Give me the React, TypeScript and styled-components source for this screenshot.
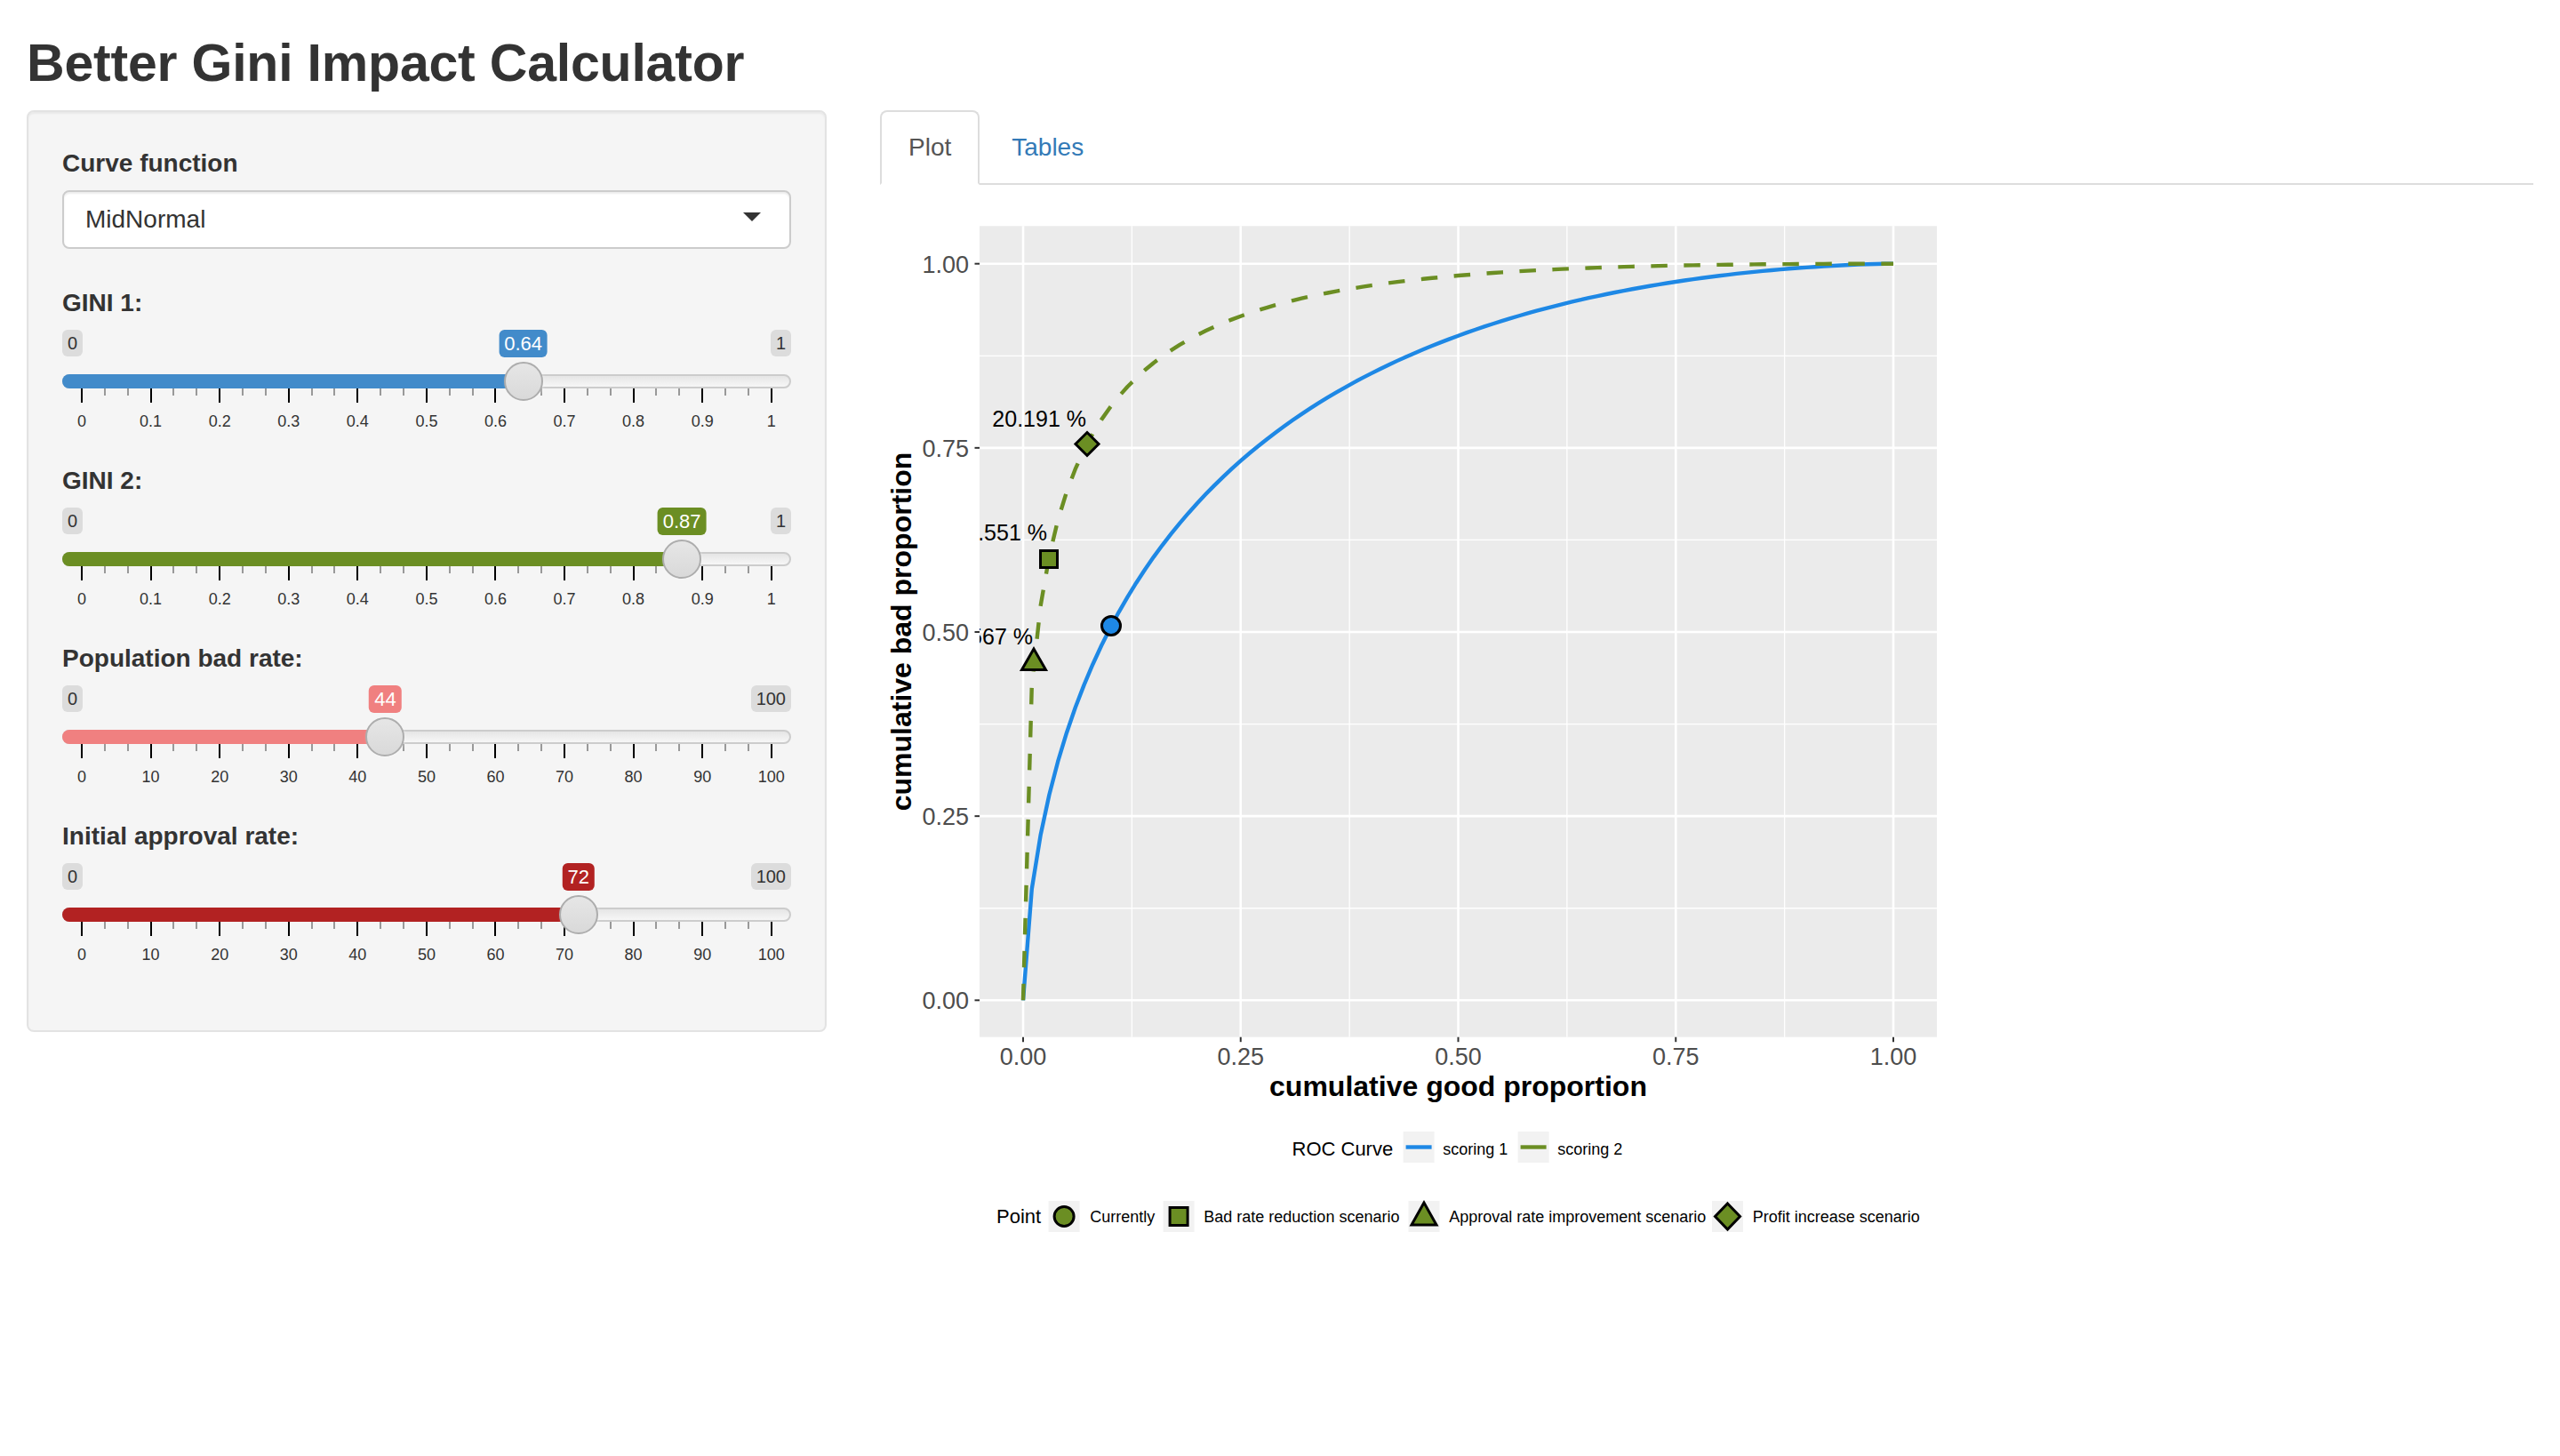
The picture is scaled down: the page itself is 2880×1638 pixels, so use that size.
import React from "react";
import styled, { createGlobalStyle } from "styled-components";

const GlobalStyle = createGlobalStyle`
  html, body { margin: 0; padding: 0; background: #fff; }
  body {
    font-family: "Liberation Sans", Helvetica, Arial, sans-serif;
    font-size: 28px;
    line-height: 40px;
    color: #333;
  }
  *, *::before, *::after { box-sizing: border-box; }
`;

/* ---------- math for the binormal ROC curves ---------- */
const erf = (v: number) => {
  const s = Math.sign(v);
  const x = Math.abs(v);
  const t = 1 / (1 + 0.3275911 * x);
  const y =
    1 -
    ((((1.061405429 * t - 1.453152027) * t + 1.421413741) * t - 0.284496736) * t + 0.254829592) *
      t *
      Math.exp(-x * x);
  return s * y;
};
const Phi = (z: number) => 0.5 * (1 + erf(z / Math.SQRT2));
const PhiInv = (p: number) => {
  const a = [-39.69683028665376, 220.9460984245205, -275.9285104469687, 138.357751867269, -30.66479806614716, 2.506628277459239];
  const b = [-54.47609879822406, 161.5858368580409, -155.6989798598866, 66.80131188771972, -13.28068155288572];
  const c = [-0.007784894002430293, -0.3223964580411365, -2.400758277161838, -2.549732539343734, 4.374664141464968, 2.938163982698783];
  const d = [0.007784695709041462, 0.3224671290700398, 2.445134137142996, 3.754408661907416];
  const plow = 0.02425;
  if (p < plow) {
    const q = Math.sqrt(-2 * Math.log(p));
    return (((((c[0] * q + c[1]) * q + c[2]) * q + c[3]) * q + c[4]) * q + c[5]) / ((((d[0] * q + d[1]) * q + d[2]) * q + d[3]) * q + 1);
  }
  if (p > 1 - plow) {
    const q = Math.sqrt(-2 * Math.log(1 - p));
    return -(((((c[0] * q + c[1]) * q + c[2]) * q + c[3]) * q + c[4]) * q + c[5]) / ((((d[0] * q + d[1]) * q + d[2]) * q + d[3]) * q + 1);
  }
  const q = p - 0.5;
  const r = q * q;
  return ((((((a[0] * r + a[1]) * r + a[2]) * r + a[3]) * r + a[4]) * r + a[5]) * q) / (((((b[0] * r + b[1]) * r + b[2]) * r + b[3]) * r + b[4]) * r + 1);
};

/* plot coordinates (inside the 1210 x 1200 plot image) */
const PX0 = 112;
const PX1 = 1189;
const PY0 = 46.3;
const PY1 = 958.7;
const X = (v: number) => 161 + 979 * v;
const Y = (v: number) => 917.3 - 828.6 * v;

const rocPoints = (gini: number) => {
  const shift = Math.SQRT2 * PhiInv((1 + gini) / 2);
  const pts: string[] = [];
  for (let i = 0; i <= 100; i++) {
    const x = i / 100;
    const y = i === 0 ? 0 : i === 100 ? 1 : Phi(shift + PhiInv(x));
    pts.push(`${X(x).toFixed(2)},${Y(y).toFixed(2)}`);
  }
  return pts.join(" ");
};

/* ---------- layout ---------- */
const Page = styled.div`
  padding: 0 30px;
`;
const Title = styled.h2`
  margin: 38px 0 20px;
  font-size: 59px;
  font-weight: 700;
  line-height: 66px;
  color: #333;
  letter-spacing: -0.2px;
`;
const Row = styled.div`
  display: grid;
  grid-template-columns: 1fr 2fr;
  margin: 0 -30px;
`;
const Col = styled.div`
  padding: 0 30px;
  min-width: 0;
`;
const Well = styled.div`
  background: #f5f5f5;
  border: 2px solid #e3e3e3;
  border-radius: 8px;
  padding: 38px;
  box-shadow: inset 0 2px 2px rgba(0, 0, 0, 0.05);
`;
const FormGroup = styled.div<{ $gap: number }>`
  margin-bottom: ${(p) => p.$gap}px;
`;
const Label = styled.label`
  display: block;
  font-weight: 700;
  font-size: 28px;
  line-height: 40px;
  margin-bottom: 10px;
`;
const SelectBox = styled.div`
  height: 66px;
  margin-top: 1px;
  display: flex;
  align-items: center;
  justify-content: space-between;
  padding: 0 32px 0 24px;
  background: #fff;
  border: 2px solid #ccc;
  border-radius: 8px;
  box-shadow: inset 0 2px 2px rgba(0, 0, 0, 0.075);
  font-size: 28px;
  color: #333;
`;
const Caret = styled.span`
  width: 0;
  height: 0;
  margin-top: -6px;
  border-style: solid;
  border-width: 10px 10px 0 10px;
  border-color: #333 transparent transparent transparent;
`;

/* ---------- slider ---------- */
const SliderBox = styled.div`
  position: relative;
  height: 120px;
`;
const EndRow = styled.div`
  display: flex;
  justify-content: space-between;
  align-items: flex-start;
  height: 50px;
`;
const EndLabel = styled.span`
  font-size: 20px;
  line-height: 26px;
  padding: 2px 6px;
  background: rgba(0, 0, 0, 0.1);
  border-radius: 6px;
  color: #333;
`;
const Bubble = styled.span<{ $color: string }>`
  position: absolute;
  top: 0;
  transform: translateX(-50%);
  font-size: 22px;
  line-height: 27px;
  padding: 2px 6px;
  background: ${(p) => p.$color};
  color: #fff;
  border-radius: 6px;
  white-space: nowrap;
`;
const Track = styled.div`
  position: relative;
  height: 16px;
  border: 2px solid #ccc;
  border-radius: 16px;
  background: linear-gradient(to bottom, #ddd -50%, #fff 150%);
`;
const Fill = styled.div<{ $color: string }>`
  position: absolute;
  left: -2px;
  top: -2px;
  bottom: -2px;
  background: ${(p) => p.$color};
  border-radius: 16px 0 0 16px;
`;
const Handle = styled.div`
  position: absolute;
  top: -16px;
  width: 44px;
  height: 44px;
  margin-left: -22px;
  border-radius: 50%;
  background: linear-gradient(to bottom, #e6e6e6, #d9d9d9);
  border: 2px solid #adadad;
  box-shadow: 1px 1px 3px rgba(255, 255, 255, 0.3);
`;
const Grid = styled.div`
  display: flex;
  justify-content: space-between;
  padding: 0 22px;
`;
const TickCol = styled.div`
  width: 0;
  display: flex;
  flex-direction: column;
  align-items: center;
`;
const TickMark = styled.div<{ $major: boolean }>`
  flex: none;
  width: 2px;
  height: ${(p) => (p.$major ? 16 : 8)}px;
  background: ${(p) => (p.$major ? "#000" : "#999")};
`;
const TickText = styled.span`
  margin-top: 10px;
  font-size: 18px;
  line-height: 22px;
  color: #333;
  white-space: nowrap;
`;

type SliderProps = { label: string; min: number; max: number; value: number; color: string; decimals: boolean };

const Slider = ({ label, min, max, value, color, decimals }: SliderProps) => {
  const f = (value - min) / (max - min);
  const ticks = Array.from({ length: 31 }, (_, i) => i);
  const fmt = (v: number) => (decimals ? String(Math.round(v * 10) / 10) : String(Math.round(v)));
  return (
    <FormGroup $gap={30}>
      <Label>{label}</Label>
      <SliderBox>
        <EndRow>
          <EndLabel>{min}</EndLabel>
          <EndLabel>{max}</EndLabel>
        </EndRow>
        <Bubble $color={color} style={{ left: `calc(22px + ${f} * (100% - 44px))` }}>
          {value}
        </Bubble>
        <Track>
          <Fill $color={color} style={{ width: `calc(22px + ${f} * (100% - 40px))` }} />
          <Handle style={{ left: `calc(20px + ${f} * (100% - 40px))` }} />
        </Track>
        <Grid>
          {ticks.map((i) => {
            const major = i % 3 === 0;
            return (
              <TickCol key={i}>
                <TickMark $major={major} />
                {major && <TickText>{fmt(min + ((max - min) * i) / 30)}</TickText>}
              </TickCol>
            );
          })}
        </Grid>
      </SliderBox>
    </FormGroup>
  );
};

/* ---------- tabs ---------- */
const NavTabs = styled.div`
  display: flex;
  border-bottom: 2px solid #ddd;
`;
const Tab = styled.a<{ $active?: boolean }>`
  display: block;
  margin-right: 4px;
  margin-bottom: -2px;
  padding: 20px 30px;
  line-height: 40px;
  font-size: 28px;
  border: 2px solid ${(p) => (p.$active ? "#ddd" : "transparent")};
  border-bottom-color: ${(p) => (p.$active ? "#fff" : "transparent")};
  border-radius: 8px 8px 0 0;
  background: ${(p) => (p.$active ? "#fff" : "transparent")};
  color: ${(p) => (p.$active ? "#555" : "#337ab7")};
  text-decoration: none;
  cursor: pointer;
`;

const PlotSvg = styled.svg`
  display: block;
  font-family: "Liberation Sans", Helvetica, Arial, sans-serif;
`;

const GREEN = "#6B8E23";
const BLUE = "#1E88E5";

const Plot = () => {
  const majors = [0, 0.25, 0.5, 0.75, 1];
  const minors = [0.125, 0.375, 0.625, 0.875];
  const fmt = (v: number) => v.toFixed(2);
  const pw = PX1 - PX0;
  const ph = PY1 - PY0;
  const cx = (PX0 + PX1) / 2;
  const cy = (PY0 + PY1) / 2;
  return (
    <PlotSvg width={1210} height={1200} viewBox="0 0 1210 1200">
      <defs>
        <clipPath id="panel">
          <rect x={PX0} y={PY0} width={pw} height={ph} />
        </clipPath>
      </defs>
      <rect x={PX0} y={PY0} width={pw} height={ph} fill="#EBEBEB" />
      {minors.map((v) => (
        <g key={`m${v}`} stroke="#fff" strokeWidth={1.3}>
          <line x1={X(v)} x2={X(v)} y1={PY0} y2={PY1} />
          <line x1={PX0} x2={PX1} y1={Y(v)} y2={Y(v)} />
        </g>
      ))}
      {majors.map((v) => (
        <g key={`M${v}`} stroke="#fff" strokeWidth={2.6}>
          <line x1={X(v)} x2={X(v)} y1={PY0} y2={PY1} />
          <line x1={PX0} x2={PX1} y1={Y(v)} y2={Y(v)} />
        </g>
      ))}
      <g clipPath="url(#panel)">
        <polyline points={rocPoints(0.64)} fill="none" stroke={BLUE} strokeWidth={4.4} strokeLinejoin="round" />
        <polyline
          points={rocPoints(0.87)}
          fill="none"
          stroke={GREEN}
          strokeWidth={4.4}
          strokeDasharray="18.5 18.5"
          strokeLinejoin="round"
        />
        <g fontSize={25} fill="#000" textAnchor="end">
          <text x={232} y={272}>20.191 %</text>
          <text x={188} y={400}>12.551 %</text>
          <text x={172} y={517}>10.567 %</text>
        </g>
      </g>
      <g stroke="#000" strokeWidth={3}>
        <circle cx={260} cy={496} r={10.5} fill={BLUE} />
        <rect x={180.5} y={411.5} width={19} height={19} fill={GREEN} />
        <polygon points="173,522 159.5,545.5 186.5,545.5" fill={GREEN} />
        <polygon points="233,278.5 246,291.5 233,304.5 220,291.5" fill={GREEN} />
      </g>
      {/* axes */}
      <g stroke="#333" strokeWidth={2}>
        {majors.map((v) => (
          <line key={`ty${v}`} x1={PX0 - 5.5} x2={PX0} y1={Y(v)} y2={Y(v)} />
        ))}
        {majors.map((v) => (
          <line key={`tx${v}`} x1={X(v)} x2={X(v)} y1={PY1} y2={PY1 + 5.5} />
        ))}
      </g>
      <g fontSize={27} fill="#4D4D4D">
        {majors.map((v) => (
          <text key={`ly${v}`} x={100} y={Y(v) + 10} textAnchor="end">
            {fmt(v)}
          </text>
        ))}
        {majors.map((v) => (
          <text key={`lx${v}`} x={X(v)} y={989.5} textAnchor="middle">
            {fmt(v)}
          </text>
        ))}
      </g>
      <text x={cx} y={1025} textAnchor="middle" fontSize={32} fontWeight={700} fill="#000">
        cumulative good proportion
      </text>
      <text transform={`translate(35,${cy}) rotate(-90)`} textAnchor="middle" fontSize={32} fontWeight={700} fill="#000">
        cumulative bad proportion
      </text>
      {/* legend: ROC curve */}
      <text x={463.5} y={1092} fontSize={22} fill="#000">ROC Curve</text>
      <rect x={588.6} y={1065} width={35} height={35} fill="#F2F2F2" />
      <line x1={591.6} x2={620.6} y1={1082.5} y2={1082.5} stroke={BLUE} strokeWidth={4.4} />
      <text x={633.3} y={1090.5} fontSize={18} fill="#000">scoring 1</text>
      <rect x={717.6} y={1065} width={35} height={35} fill="#F2F2F2" />
      <line x1={720.6} x2={749.6} y1={1082.5} y2={1082.5} stroke={GREEN} strokeWidth={4.4} />
      <text x={762.3} y={1090.5} fontSize={18} fill="#000">scoring 2</text>
      {/* legend: Point */}
      <text x={131} y={1168} fontSize={22} fill="#000">Point</text>
      <rect x={189.6} y={1143} width={35} height={35} fill="#F2F2F2" />
      <rect x={318.6} y={1143} width={35} height={35} fill="#F2F2F2" />
      <rect x={594.5} y={1143} width={35} height={35} fill="#F2F2F2" />
      <rect x={936} y={1143} width={35} height={35} fill="#F2F2F2" />
      <g stroke="#000" strokeWidth={3} fill={GREEN}>
        <circle cx={207.1} cy={1160.5} r={11} />
        <rect x={326.1} y={1150.5} width={20} height={20} />
        <polygon points="612,1145 598,1170 626,1170" />
        <polygon points="953.5,1146 967.5,1160.5 953.5,1175 939.5,1160.5" />
      </g>
      <g fontSize={18} fill="#000">
        <text x={236.2} y={1167}>Currently</text>
        <text x={364.3} y={1167}>Bad rate reduction scenario</text>
        <text x={640.2} y={1167}>Approval rate improvement scenario</text>
        <text x={981.7} y={1167}>Profit increase scenario</text>
      </g>
    </PlotSvg>
  );
};

export default function App() {
  return (
    <>
      <GlobalStyle />
      <Page>
        <Title>Better Gini Impact Calculator</Title>
        <Row>
          <Col>
            <Well>
              <FormGroup $gap={41}>
                <Label>Curve function</Label>
                <SelectBox>
                  <span>MidNormal</span>
                  <Caret />
                </SelectBox>
              </FormGroup>
              <Slider label="GINI 1:" min={0} max={1} value={0.64} color="#428bca" decimals />
              <Slider label="GINI 2:" min={0} max={1} value={0.87} color="#6B8E23" decimals />
              <Slider label="Population bad rate:" min={0} max={100} value={44} color="#F08080" decimals={false} />
              <Slider label="Initial approval rate:" min={0} max={100} value={72} color="#B22222" decimals={false} />
            </Well>
          </Col>
          <Col>
            <NavTabs>
              <Tab $active>Plot</Tab>
              <Tab>Tables</Tab>
            </NavTabs>
            <Plot />
          </Col>
        </Row>
      </Page>
    </>
  );
}
